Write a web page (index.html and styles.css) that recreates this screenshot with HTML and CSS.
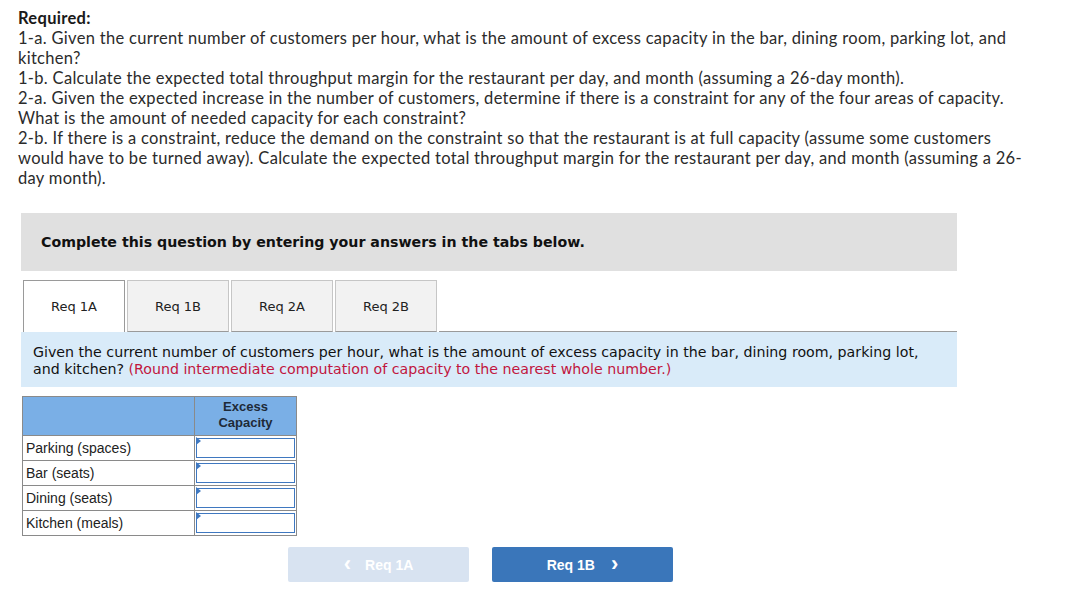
FILE: index.html
```html
<!DOCTYPE html>
<html>
<head>
<meta charset="utf-8">
<link rel="stylesheet" href="styles.css">
</head>
<body>
<div class="required">
  <div class="req-title">Required:</div>
  <div>1-a. Given the current number of customers per hour, what is the amount of excess capacity in the bar, dining room, parking lot, and kitchen?</div>
  <div>1-b. Calculate the expected total throughput margin for the restaurant per day, and month (assuming a 26-day month).</div>
  <div>2-a. Given the expected increase in the number of customers, determine if there is a constraint for any of the four areas of capacity. What is the amount of needed capacity for each constraint?</div>
  <div>2-b. If there is a constraint, reduce the demand on the constraint so that the restaurant is at full capacity (assume some customers would have to be turned away). Calculate the expected total throughput margin for the restaurant per day, and month (assuming a 26-day month).</div>
</div>

<div class="question">
  <div class="banner">Complete this question by entering your answers in the tabs below.</div>

  <div class="tabs">
    <div class="tab active">Req 1A</div>
    <div class="tab">Req 1B</div>
    <div class="tab">Req 2A</div>
    <div class="tab">Req 2B</div>
    <div class="tab-rest"></div>
  </div>

  <div class="prompt">Given the current number of customers per hour, what is the amount of excess capacity in the bar, dining room, parking lot, and kitchen? <span class="hint">(Round intermediate computation of capacity to the nearest whole number.)</span></div>

  <table class="grid">
    <tr class="head">
      <th class="label-col"></th>
      <th class="val-col">Excess<br>Capacity</th>
    </tr>
    <tr><td class="label">Parking (spaces)</td><td class="input"><div class="box"></div></td></tr>
    <tr><td class="label">Bar (seats)</td><td class="input"><div class="box"></div></td></tr>
    <tr><td class="label">Dining (seats)</td><td class="input"><div class="box"></div></td></tr>
    <tr><td class="label">Kitchen (meals)</td><td class="input"><div class="box"></div></td></tr>
  </table>

  <div class="nav">
    <div class="btn prev"><span class="chev">&lsaquo;</span>Req 1A</div>
    <div class="btn next">Req 1B<span class="chev">&rsaquo;</span></div>
  </div>
</div>
</body>
</html>
```

FILE: styles.css
```css
html, body {
  margin: 0;
  padding: 0;
  background: #ffffff;
}

.required {
  padding: 8px 18px 0 18px;
  font-family: Lato, "Liberation Sans", sans-serif;
  font-size: 16.5px;
  letter-spacing: 0.3px;
  line-height: 20px;
  color: #2b2b2b;
  width: 1014px;
}

.req-title {
  font-weight: bold;
  color: #1a1a1a;
}

.question {
  margin: 25px 0 0 21px;
  width: 936px;
}

.banner {
  background: #e0e0e0;
  height: 58px;
  display: flex;
  align-items: center;
  padding-left: 20px;
  font-family: "DejaVu Sans", Verdana, sans-serif;
  font-weight: bold;
  font-size: 14.2px;
  color: #111;
}

.tabs {
  display: flex;
  margin-top: 9px;
  height: 52px;
  padding-left: 2px;
}

.tab {
  border: 1px solid #c6c6c6;
  border-bottom: 1px solid #9a9a9a;
  background: #f2f2f2;
  margin-right: 2px;
  display: flex;
  align-items: center;
  justify-content: center;
  font-family: "DejaVu Sans", Verdana, sans-serif;
  font-size: 13px;
  color: #222;
  box-sizing: border-box;
  width: 102px;
}

.tab.active {
  background: #ffffff;
  border: 1px solid #9a9a9a;
  border-bottom: none;
  height: 52px;
}

.tab-rest {
  flex: 1;
  border-bottom: 1px solid #9a9a9a;
}

.prompt {
  background: #d9ebf9;
  padding: 12px 12px 9px 12px;
  font-family: "DejaVu Sans", Verdana, sans-serif;
  font-size: 14.2px;
  line-height: 17px;
  color: #111;
}

.hint {
  color: #c1163e;
}

.grid {
  margin-top: 9px;
  margin-left: 1px;
  border-collapse: collapse;
  font-family: "Liberation Sans", Arial, sans-serif;
  font-size: 14px;
  color: #222;
}

.grid td, .grid th {
  border: 1px solid #8a8a8a;
  padding: 0;
}

.head th {
  background: #7aafe6;
  height: 36px;
  font-weight: bold;
  font-size: 13px;
  line-height: 16px;
  color: #1e2a38;
  vertical-align: top;
  padding-top: 2px;
}

.label-col {
  width: 171px;
}

.val-col {
  width: 101px;
}

.label {
  height: 22px;
  padding-left: 3px !important;
  vertical-align: middle;
}

.input {
  position: relative;
  height: 22px;
  padding: 1px !important;
}

.box {
  height: 18px;
  border: 1px solid #3f78c0;
  background: #fff;
  position: relative;
}

.input::before {
  content: "";
  position: absolute;
  left: 1px;
  top: 1px;
  width: 0;
  height: 0;
  border-top: 4px solid transparent;
  border-bottom: 4px solid transparent;
  border-left: 5px solid #3f78c0;
  z-index: 2;
}

.nav {
  display: flex;
  margin-top: 11px;
  margin-left: 267px;
  gap: 23px;
}

.btn {
  width: 181px;
  height: 35px;
  border-radius: 2px;
  display: flex;
  align-items: center;
  justify-content: center;
  font-family: "Liberation Sans", Arial, sans-serif;
  font-weight: bold;
  font-size: 14px;
  color: #fff;
}

.prev {
  background: #d8e3f1;
}

.next {
  background: #3a76ba;
}

.chev {
  font-size: 22px;
  line-height: 20px;
  font-weight: bold;
  position: relative;
  top: -1px;
}

.prev .chev {
  margin-right: 14px;
}

.next .chev {
  margin-left: 16px;
}
```
